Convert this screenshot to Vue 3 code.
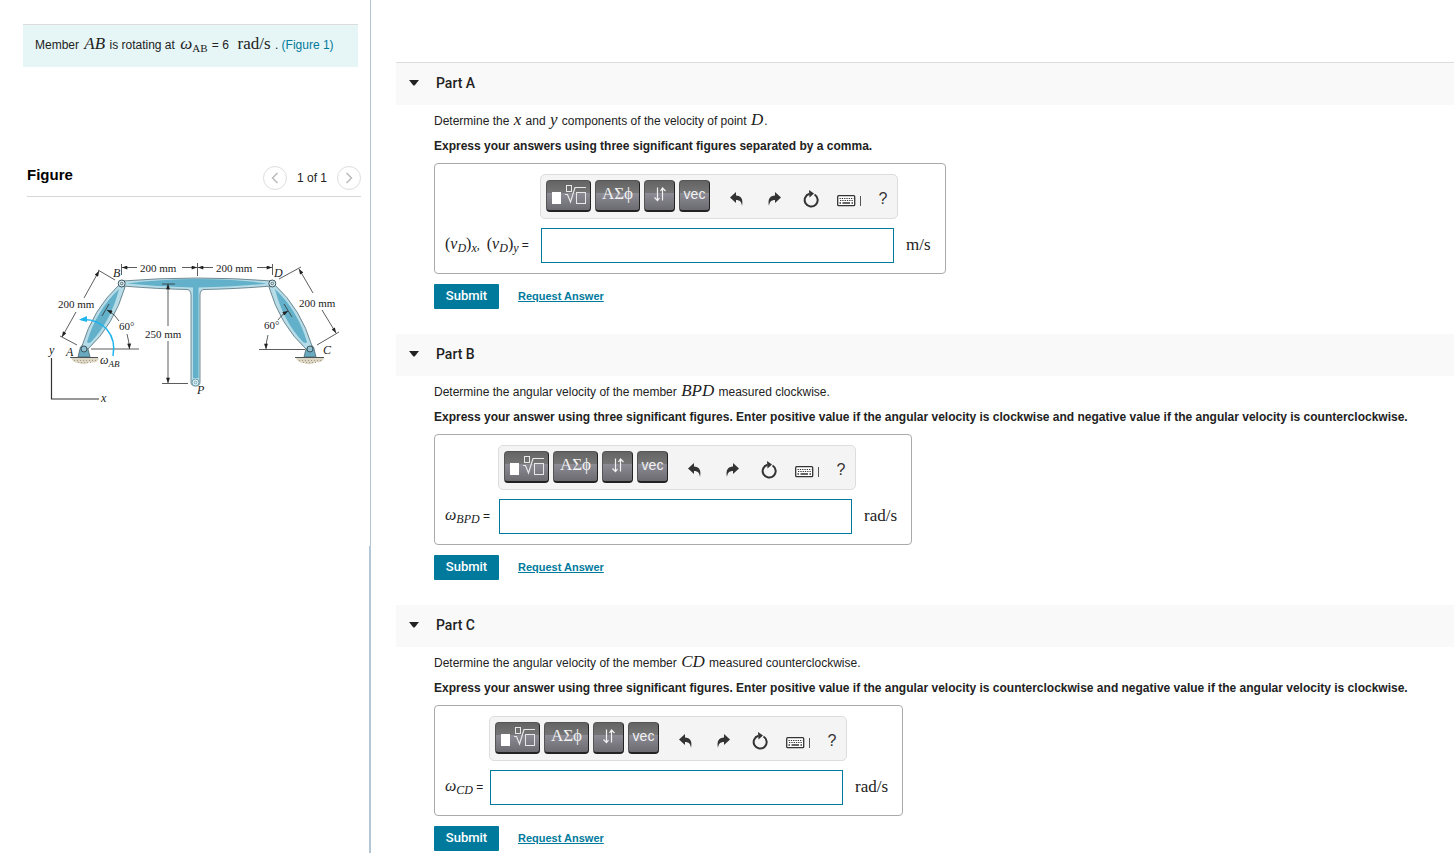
<script setup>
import { ref } from 'vue'

// math: true の部分は数式書体で表示
const parts = [
  {
    id: 'a',
    title: 'Part A',
    question: [
      { text: 'Determine the ' },
      { text: 'x', math: true },
      { text: ' and ' },
      { text: 'y', math: true },
      { text: ' components of the velocity of point ' },
      { text: 'D', math: true },
      { text: '.' }
    ],
    hint: 'Express your answers using three significant figures separated by a comma.',
    unit: 'm/s'
  },
  {
    id: 'b',
    title: 'Part B',
    question: [
      { text: 'Determine the angular velocity of the member ' },
      { text: 'BPD', math: true },
      { text: ' measured clockwise.' }
    ],
    hint: 'Express your answer using three significant figures. Enter positive value if the angular velocity is clockwise and negative value if the angular velocity is counterclockwise.',
    sub: 'BPD',
    unit: 'rad/s'
  },
  {
    id: 'c',
    title: 'Part C',
    question: [
      { text: 'Determine the angular velocity of the member ' },
      { text: 'CD', math: true },
      { text: ' measured counterclockwise.' }
    ],
    hint: 'Express your answer using three significant figures. Enter positive value if the angular velocity is counterclockwise and negative value if the angular velocity is clockwise.',
    sub: 'CD',
    unit: 'rad/s'
  }
]

const answers = ref({ a: '', b: '', c: '' })
const closed = ref({})

const toggle = (id) => {
  closed.value[id] = !closed.value[id]
}
</script>

<template>
  <div class="page">
    <aside class="side">
      <p class="prompt">
        Member <i class="math">AB</i> is rotating at <span class="math"><i>ω</i><sub>AB</sub></span> = 6&nbsp; <span class="math">rad/s</span> . <a href="#figure">(Figure 1)</a>
      </p>

      <section id="figure" class="figure">
        <header class="figure-head">
          <h2>Figure</h2>
          <nav class="pager">
            <button type="button" aria-label="Previous figure">
              <svg width="8" height="12" viewBox="0 0 8 12"><path d="M6.500 1L1.500 6l5 5" /></svg>
            </button>
            <span>1 of 1</span>
            <button type="button" aria-label="Next figure">
              <svg width="8" height="12" viewBox="0 0 8 12"><path d="M1.500 1L6.500 6l-5 5" /></svg>
            </button>
          </nav>
        </header>

        <svg class="diagram" width="300" height="155" viewBox="45 255 300 155">
          <defs>
            <marker id="arrow" viewBox="0 0 8 6" refX="8" refY="3" markerWidth="7" markerHeight="4" markerUnits="userSpaceOnUse" orient="auto">
              <path d="M0 0L8 3L0 6Z" fill="#222" />
            </marker>
            <marker id="arrow-blue" viewBox="0 0 8 6" refX="6" refY="3" markerWidth="8" markerHeight="6" markerUnits="userSpaceOnUse" orient="auto">
              <path d="M0 0L8 3L0 6Z" fill="#1eb4ee" />
            </marker>
          </defs>

          <!-- 地面 -->
          <g fill="#ddd6c4">
            <path d="M71 358H99Q97 364 90 362Q84 366 79 363Q73 363 71 358Z" />
            <path d="M296 358H324Q323 363 316 362Q310 366 304 363Q298 363 296 358Z" />
          </g>
          <g stroke="#a59c88" stroke-dasharray="1 2" fill="none">
            <path d="M74 360.500H96M78 362.500H92M299 360.500H321M303 362.500H317" />
          </g>

          <!-- 支点 -->
          <g fill="#69a9bf" stroke="#49646e" stroke-width=".8">
            <path d="M78 357L80.500 347Q84 343 87.500 347L90 357Z" />
            <path d="M304 357L306.500 347Q310 343 313.500 347L316 357Z" />
          </g>
          <path d="M70 357.500H98M295 357.500H324" stroke="#4b5558" />

          <!-- T形部材 -->
          <path
            d="M122 281Q160 278 197 278Q235 278 272 281V286Q235 289 204 289.500Q200 290 200 295V382Q200 386 195.500 386Q191 386 191 382V295Q191 290 187 289.500Q160 289 122 286Z"
            fill="#b6dce8" stroke="#56717b" stroke-width=".8"
          />
          <path d="M127 283.500Q160 279 197 279Q235 279 267 283.500Q235 287 198.500 287.500V378H193V287.500Q160 287 127 283.500Z" fill="#62b0ca" />

          <!-- リンクABとCD -->
          <path d="M82 346Q93 309 119 285L125 287Q114 325 88 349Z" fill="#b6dce8" stroke="#56717b" stroke-width=".8" />
          <path d="M87 342Q96 311 119 289Q111 321 91 342Q88 344 87 342Z" fill="#62b0ca" />
          <path d="M312 346Q301 309 275 285L269 287Q280 325 306 349Z" fill="#b6dce8" stroke="#56717b" stroke-width=".8" />
          <path d="M307 342Q298 311 275 289Q283 321 303 342Q306 344 307 342Z" fill="#62b0ca" />

          <!-- ピン -->
          <g fill="#dceff4" stroke="#3d545d">
            <circle cx="121.700" cy="283.500" r="3.500" />
            <circle cx="272.300" cy="283.500" r="3.500" />
            <circle cx="84" cy="349" r="3" fill="#8fc0d1" />
            <circle cx="310" cy="349" r="3" fill="#8fc0d1" />
            <circle cx="195.500" cy="382.500" r="3.500" stroke="#6b9dad" />
          </g>
          <g fill="none" stroke="#3d545d" stroke-width=".8">
            <circle cx="121.700" cy="283.500" r="1.300" />
            <circle cx="272.300" cy="283.500" r="1.300" />
            <circle cx="195.500" cy="382.500" r="1.300" stroke="#6b9dad" />
          </g>

          <!-- 寸法線 -->
          <g stroke="#333" stroke-width=".8" fill="none">
            <path d="M121.500 264V275M197.500 263V276M272.500 264V275" />
            <path d="M98 270L115 280M60 336L77 345M279 279L301 267M317 345L339 332" />
            <path d="M162 284H175M162 383.500H188M91 349H139M259 349.500H305" />
            <path d="M102 316L109 304M284 304L292 317" />
            <path d="M51.500 358V399H99" stroke-width="1.200" />
          </g>
          <g stroke="#333" stroke-width=".8" fill="none" marker-end="url(#arrow)">
            <path d="M137 267.500H122" />
            <path d="M182 267.500H197" />
            <path d="M213 267.500H198" />
            <path d="M257 267.500H272" />
            <path d="M84 298L99 271" />
            <path d="M76 312L62 337" />
            <path d="M313 293L299 269" />
            <path d="M322 310L336 333" />
            <path d="M168 326V284" />
            <path d="M168 341V383" />
            <path d="M119 321Q115 314 107 310" />
            <path d="M127 334Q129 341 129.500 349" />
            <path d="M278 320Q281 315 288 311" />
            <path d="M268 335Q266 342 266 349" />
          </g>
          <path d="M113 356C117 335 103 318 81 319.500" fill="none" stroke="#1eb4ee" stroke-width="1.500" marker-end="url(#arrow-blue)" />

          <g class="dims">
            <text x="140" y="272">200 mm</text>
            <text x="216" y="272">200 mm</text>
            <text x="58" y="308">200 mm</text>
            <text x="299" y="307">200 mm</text>
            <text x="145" y="338">250 mm</text>
            <text x="119" y="330">60°</text>
            <text x="264" y="329">60°</text>
          </g>
          <g class="points">
            <text x="113" y="277">B</text>
            <text x="274" y="277">D</text>
            <text x="66" y="356">A</text>
            <text x="323" y="354">C</text>
            <text x="197" y="394">P</text>
            <text x="49" y="354">y</text>
            <text x="101" y="402">x</text>
            <text x="100" y="364">ω<tspan class="small" dy="3">AB</tspan></text>
          </g>
        </svg>
      </section>
    </aside>

    <div class="divider"><span class="line"></span><span class="grip"></span></div>

    <main class="main">
      <section v-for="part in parts" :key="part.id" class="part">
        <h2 class="part-head">
          <button type="button" :aria-expanded="!closed[part.id]" @click="toggle(part.id)">
            <svg width="10" height="6" viewBox="0 0 10 6"><path d="M0 0H10L6 5Q5 6 4 5Z" fill="#222" /></svg>
            {{ part.title }}
          </button>
        </h2>

        <div v-show="!closed[part.id]" class="part-body">
          <p class="question"><span v-for="(seg, i) in part.question" :key="i" :class="{ math: seg.math, italic: seg.math }">{{ seg.text }}</span></p>
          <p class="hint">{{ part.hint }}</p>

          <div class="answer" :class="'answer-' + part.id">
            <div class="toolbar">
              <button type="button" class="key wide" aria-label="Templates">
                <svg width="36" height="22" viewBox="0 0 36 22">
                  <rect x="1" y="9" width="9" height="12" fill="#fff" />
                  <path d="M14 11.500h2.500L19.500 19L24 4.500H35" fill="none" stroke="#e8e8e8" stroke-width="1.200" />
                  <rect x="15.500" y="2.500" width="5" height="6" fill="none" stroke="#e8e8e8" />
                  <rect x="25.500" y="9.500" width="9" height="11" fill="none" stroke="#e8e8e8" />
                </svg>
              </button>
              <button type="button" class="key wide greek">ΑΣϕ</button>
              <button type="button" class="key" aria-label="Arrows">
                <svg width="14" height="16" viewBox="0 0 14 16">
                  <path d="M4.500 1.500V14M1.500 11.500L4.500 14.500L6.500 12M9.500 14.500V2M7.500 5L9.500 2L12.500 5" fill="none" stroke="#f2f2f2" stroke-width="1.200" />
                </svg>
              </button>
              <button type="button" class="key vec">vec</button>
              <button type="button" class="tool first" aria-label="Undo">
                <svg width="14" height="14" viewBox="0 0 14 14"><path d="M0 5.500L6 0V3.500C11 3.500 13.500 7 12 14C11.500 10 10 8 6 8V11Z" fill="#333" /></svg>
              </button>
              <button type="button" class="tool" aria-label="Redo">
                <svg width="14" height="14" viewBox="0 0 14 14"><path d="M14 5.500L8 0V3.500C3 3.500 .5 7 2 14C2.500 10 4 8 8 8V11Z" fill="#333" /></svg>
              </button>
              <button type="button" class="tool" aria-label="Reset">
                <svg width="16" height="18" viewBox="0 0 16 18">
                  <path d="M11.500 4.500A6.500 6.500 0 1 1 6.500 3.800" fill="none" stroke="#333" stroke-width="2" />
                  <path d="M6 0L11 3.500L6.500 7.500Z" fill="#333" />
                </svg>
              </button>
              <button type="button" class="tool keyboard" aria-label="Keyboard shortcuts">
                <svg width="25" height="12" viewBox="0 0 25 12">
                  <rect x=".7" y=".7" width="17" height="10" rx="1" fill="#fff" stroke="#333" stroke-width="1.300" />
                  <path d="M2.500 3.500H16.500M3 5.500H16.500" stroke="#333" stroke-width="1.200" stroke-dasharray="1.300 1" />
                  <path d="M2.500 8H4M5.500 8H13M14.500 8H16" stroke="#333" stroke-width="1.300" />
                  <path d="M23.500 1V11" stroke="#555" />
                </svg>
              </button>
              <button type="button" class="tool help" aria-label="Help">?</button>
            </div>

            <label :for="'answer-' + part.id">
              <span v-if="part.id === 'a'" class="math">(<i>v</i><sub><i>D</i></sub>)<sub><i>x</i></sub><small>, </small>(<i>v</i><sub><i>D</i></sub>)<sub><i>y</i></sub></span>
              <span v-else class="math"><i>ω</i><sub><i>{{ part.sub }}</i></sub></span>
              =
            </label>
            <input :id="'answer-' + part.id" v-model="answers[part.id]" type="text" autocomplete="off" />
            <span class="unit math">{{ part.unit }}</span>
          </div>

          <div class="actions">
            <button type="button" class="submit">Submit</button>
            <a href="#">Request Answer</a>
          </div>
        </div>
      </section>
    </main>
  </div>
</template>

<style>
body {
  margin: 0;
  background: #fff;
}
</style>

<style scoped>
.page {
  display: flex;
  height: 100vh;
  overflow: hidden;
  font-family: "Liberation Sans", Arial, sans-serif;
  font-size: 12px;
  line-height: 16px;
  color: #222;
}

p, h2 { margin: 0; }
button { font-family: inherit; cursor: pointer; }
a { color: #007a9c; }

/* ===== 数式 ===== */
.math {
  font-family: "Liberation Serif", "Times New Roman", serif;
  font-size: 17px;
  line-height: 0;
}
.math sub {
  font-size: 12px;
  line-height: 0;
  vertical-align: -3px;
}
.math small {
  margin-right: 4px;
  font-size: 12px;
}
.italic { font-style: italic; }
.question .math { margin: 0 1px; }

/* ===== 左側 ===== */
.side {
  flex: 0 0 369px;
  box-sizing: border-box;
  padding: 24px 8px 0 23px;
}
.prompt {
  margin-right: 3px;
  padding: 12px 12px 14px;
  border-top: 1px solid #dcdcdc;
  background: #e6f6f7;
}
.prompt .math { margin: 0 1px 0 2px; }
.prompt sub { font-size: 11px; }
.prompt a { text-decoration: none; }

.figure { margin: 99px 0 0 4px; }
.figure-head {
  display: flex;
  justify-content: space-between;
  align-items: flex-start;
  padding-bottom: 6px;
  border-bottom: 1px solid #d8d8d8;
}
.figure-head h2 {
  font-size: 15px;
  line-height: 18px;
  color: #000;
}
.pager {
  display: flex;
  align-items: center;
  gap: 10px;
}
.pager button {
  display: flex;
  align-items: center;
  justify-content: center;
  width: 24px;
  height: 24px;
  padding: 0;
  border: 1px solid #ddd;
  border-radius: 50%;
  background: #fff;
}
.pager path {
  fill: none;
  stroke: #bbb;
  stroke-width: 1.5;
}
.diagram {
  display: block;
  margin: 58px 0 0 18px;
  font-family: "Liberation Serif", "Times New Roman", serif;
  fill: #222;
}
.dims { font-size: 11px; }
.points { font-size: 12px; font-style: italic; }
.small { font-size: 9px; }

/* ===== 区切り線 ===== */
.divider {
  display: flex;
  flex: 0 0 2px;
  flex-direction: column;
  align-items: flex-end;
}
.line { flex: 64; width: 1px; background: #b3c6d6; }
.grip { flex: 36; width: 2px; background: #b3c6d6; }

/* ===== 右側 ===== */
.main {
  flex: 1;
  min-width: 0;
  margin: 62px 0 0 25px;
  border-top: 1px solid #dcdcdc;
}
.part-head { background: #f9f9f9; }
.part-head button {
  display: flex;
  align-items: center;
  gap: 17px;
  width: 100%;
  height: 42px;
  padding: 0 13px 2px;
  border: 0;
  background: none;
  font-family: Roboto, sans-serif;
  font-size: 14px;
  font-weight: 500;
  color: #222;
}
.part-body { padding: 8px 0 25px 38px; }
.hint {
  margin: 9px 0;
  font-weight: bold;
}

.answer {
  display: grid;
  row-gap: 9px;
  width: fit-content;
  padding: 10px 14px 10px 10px;
  border: 1px solid #aaa;
  border-radius: 4px;
}
.answer-a { grid-template-columns: 95px 358px auto; }
.answer-b { grid-template-columns: 53px 358px auto; }
.answer-c { grid-template-columns: 44px 358px auto; }
.answer label {
  grid-column: 1;
  align-self: center;
  padding-bottom: 2px;
  white-space: nowrap;
}
.answer input {
  box-sizing: border-box;
  width: 353px;
  height: 35px;
  margin: 0 0 0 1px;
  padding: 0 8px;
  border: 1px solid #007a9c;
  background: #fff;
  font-size: 14px;
}
.answer label .math { font-size: 16px; }
.unit {
  align-self: center;
  padding: 0 0 2px 8px;
}

/* ===== ツールバー ===== */
.toolbar {
  display: flex;
  grid-column: 2;
  align-items: center;
  box-sizing: border-box;
  height: 45px;
  padding: 0 0 2px 5px;
  border: 1px solid #ddd;
  border-radius: 5px;
  background: #f4f4f4;
}
.key {
  display: flex;
  flex-shrink: 0;
  align-items: center;
  justify-content: center;
  box-sizing: border-box;
  width: 31px;
  height: 32px;
  margin-right: 4px;
  padding: 0 0 3px;
  border: 1px solid #555;
  border-right-color: #222;
  border-bottom: 2px solid #222;
  border-radius: 4px;
  background: linear-gradient(#646464, #747474 40%, #8d8c96 41%, #6b6b70);
  color: #f2f2f2;
}
.key.wide { width: 45px; }
.greek {
  font-family: "Liberation Serif", serif;
  font-size: 17px;
}
.vec { font-size: 14px; }
.tool {
  display: flex;
  flex-shrink: 0;
  align-items: center;
  justify-content: center;
  width: 37px;
  height: 32px;
  padding: 7px 0 0;
  border: 0;
  background: none;
  color: #333;
}
.first { margin-left: 4px; }
.keyboard { width: 41px; padding-top: 10px; }
.help { width: 26px; font-size: 16px; }

/* ===== 送信 ===== */
.actions {
  display: flex;
  align-items: center;
  gap: 19px;
  margin-top: 10px;
}
.submit {
  width: 65px;
  height: 25px;
  padding: 0 0 2px;
  border: 0;
  border-radius: 1px;
  background: #007a9c;
  font-family: Roboto, sans-serif;
  font-size: 13px;
  font-weight: 500;
  color: #fff;
}
.actions a {
  padding-bottom: 2px;
  font-size: 11px;
  font-weight: bold;
}
</style>
